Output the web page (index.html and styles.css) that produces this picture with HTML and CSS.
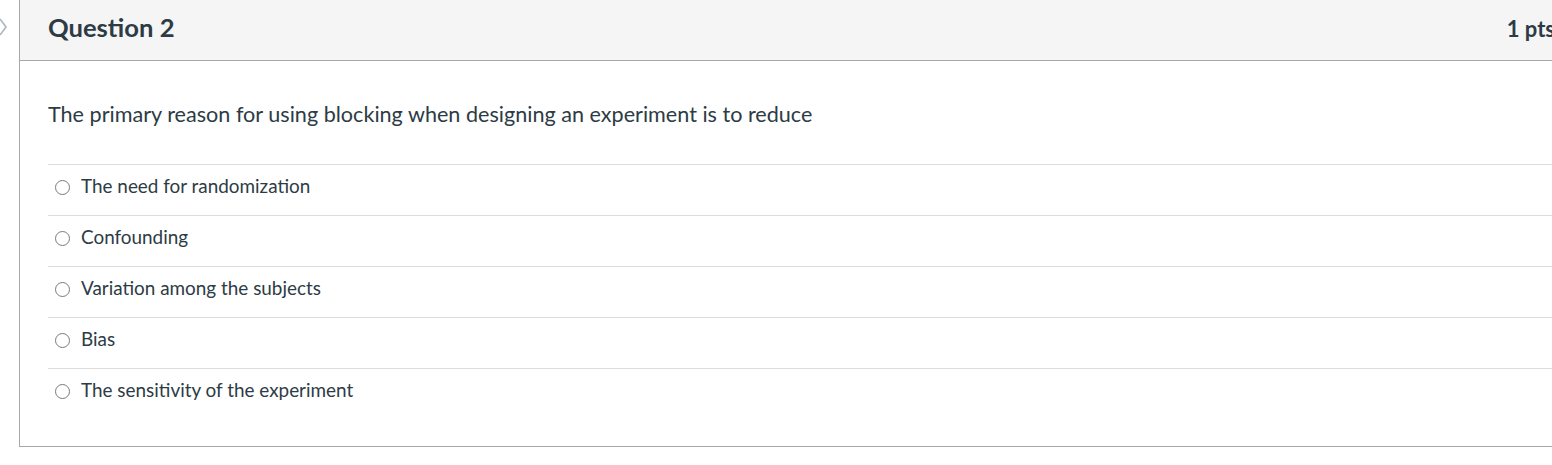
FILE: index.html
```html
<!DOCTYPE html>
<html lang="en">
<head>
<meta charset="utf-8">
<title>Question 2</title>
<link rel="stylesheet" href="styles.css">
</head>
<body>
<div class="page">
  <div class="gutter">
    <svg class="chevron" width="9" height="20" viewBox="0 0 9 20" aria-hidden="true">
      <polyline points="1,2 7,10 1,18" fill="none" stroke="#a9b6c1" stroke-width="1.6"/>
    </svg>
  </div>
  <div class="question">
    <div class="header">
      <h2 class="name">Question 2</h2>
      <span class="pts">1 pts</span>
    </div>
    <div class="content">
      <p class="text">The primary reason for using blocking when designing an experiment is to reduce</p>
      <ul class="answers">
        <li class="answer"><span class="radio"></span><span class="label">The need for randomization</span></li>
        <li class="answer"><span class="radio"></span><span class="label">Confounding</span></li>
        <li class="answer"><span class="radio"></span><span class="label">Variation among the subjects</span></li>
        <li class="answer"><span class="radio"></span><span class="label">Bias</span></li>
        <li class="answer"><span class="radio"></span><span class="label">The sensitivity of the experiment</span></li>
      </ul>
    </div>
  </div>
</div>
</body>
</html>
```
FILE: styles.css
```css
html, body {
  margin: 0;
  padding: 0;
  background: #ffffff;
  overflow: hidden;
}
body {
  font-family: Lato, "Open Sans", sans-serif;
  color: #2d3b45;
}
.page {
  display: flex;
  align-items: flex-start;
  width: 1620px;
}
.gutter {
  width: 19px;
  flex: none;
  padding-top: 17px;
}
.chevron {
  display: block;
  margin-left: -1px;
}
.question {
  width: 1568px;
  flex: none;
  border-left: 1px solid #a8a8a8;
  border-bottom: 1px solid #a8a8a8;
}
.header {
  height: 60px;
  background: #f5f5f5;
  border-bottom: 1px solid #a8a8a8;
  display: flex;
  align-items: center;
  justify-content: space-between;
  padding: 0 33px 0 28px;
}
.name {
  margin: 0;
  font-size: 25.6px;
  font-weight: 700;
  line-height: 1;
  position: relative;
  top: -2px;
}
.pts {
  font-size: 22px;
  font-weight: 700;
  color: #2d3b45;
  position: relative;
  top: -2px;
}
.content {
  padding: 38px 0 27px 28px;
}
.text {
  margin: 0 0 35px 0;
  font-size: 21.6px;
  line-height: 30px;
}
.answers {
  list-style: none;
  margin: 0;
  padding: 0;
}
.answer {
  display: flex;
  align-items: center;
  height: 50px;
  border-top: 1px solid #dcdcdc;
}
.radio {
  width: 15px;
  height: 15px;
  border: 1.5px solid #7a7a7a;
  border-radius: 50%;
  box-sizing: border-box;
  margin: 0 11px 0 7px;
  flex: none;
  position: relative;
  top: -3px;
}
.label {
  font-size: 18.9px;
  line-height: 24px;
  position: relative;
  top: -4px;
}
```
